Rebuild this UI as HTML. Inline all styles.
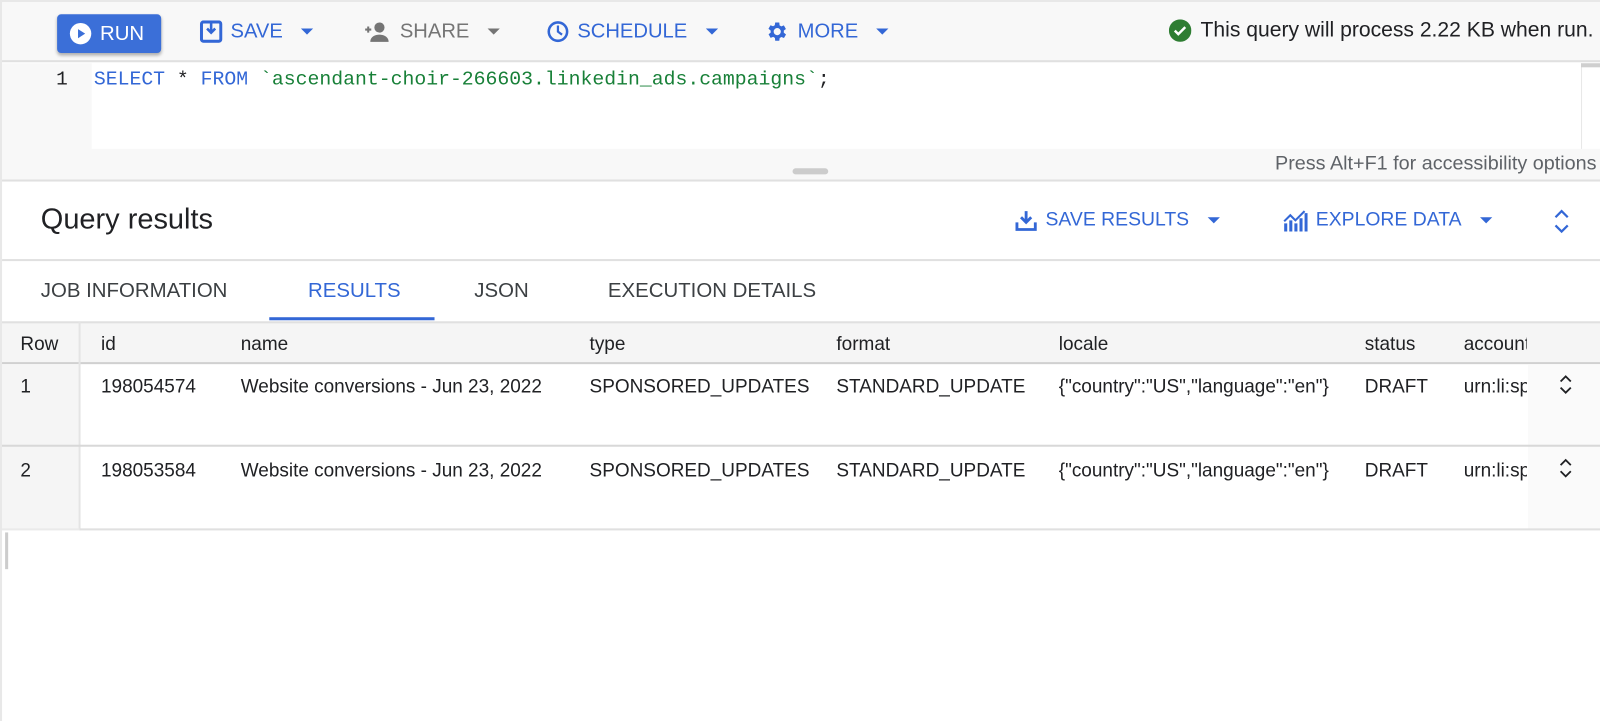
<!DOCTYPE html>
<html><head><style>
*{box-sizing:border-box;margin:0;padding:0}
body{width:1600px;height:707px;overflow:hidden;background:#fff;font-family:"Liberation Sans",Arial,sans-serif;position:relative;color:#202124}
#w{position:absolute;left:0;top:0;width:1600px;height:707px;transform:scale(1.02);transform-origin:0 0}
.a{position:absolute;white-space:nowrap}
.btn{position:absolute;top:17px;font-size:19.8px;color:#3367d6;display:flex;align-items:center;gap:8px;height:28px;white-space:nowrap}
.caret{width:0;height:0;border-left:6px solid transparent;border-right:6px solid transparent;border-top:6px solid currentColor;margin-left:10px}
.th{position:absolute;top:326px;font-size:18.6px;color:#202124;white-space:nowrap}
.td{position:absolute;font-size:18.6px;color:#202124;white-space:nowrap}
</style></head><body><div id="w">
<!-- toolbar -->
<div class="a" style="left:0;top:0;width:1600px;height:61px;background:#f8f8f8;border-top:2px solid #e8e8e8;border-bottom:2px solid #e0e0e0"></div>
<div class="a" style="left:0;top:0;width:2px;height:707px;background:#e8e8e8"></div>
<div class="a" style="left:56px;top:14px;width:102px;height:38px;background:#3b6fd8;border-radius:4px;box-shadow:0 2px 3px rgba(0,0,0,.3);color:#fff;font-size:20px;display:flex;align-items:center;padding-left:12px;gap:8px">
<svg width="22" height="22" viewBox="0 0 22 22"><circle cx="11" cy="11" r="10.5" fill="#fff"/><path d="M8.5 6.5v9l7-4.5z" fill="#3b6fd8"/></svg>RUN</div>
<div class="btn" style="left:196px"><svg width="22" height="22" viewBox="0 0 22 22"><rect x="1.5" y="1.5" width="19" height="19" rx="2" fill="none" stroke="#3367d6" stroke-width="3"/><path d="M11 3v9M7 8l4 4 4-4" stroke="#3367d6" stroke-width="2.5" fill="none"/></svg>SAVE<span class="caret"></span></div>
<div class="btn" style="left:356px;color:#757575"><svg width="28" height="22" viewBox="0 0 28 22"><path d="M2 9h6M5 6v6" stroke="#757575" stroke-width="2"/><circle cx="16" cy="7" r="5" fill="#757575"/><path d="M7 21c0-5 5-7 9-7s9 2 9 7z" fill="#757575"/></svg>SHARE<span class="caret"></span></div>
<div class="btn" style="left:536px"><svg width="22" height="22" viewBox="0 0 22 22"><circle cx="11" cy="11" r="9" fill="none" stroke="#3367d6" stroke-width="2.5"/><path d="M11 5v6l4 3" stroke="#3367d6" stroke-width="2.2" fill="none"/></svg>SCHEDULE<span class="caret"></span></div>
<div class="btn" style="left:750px"><svg width="24" height="24" viewBox="0 0 24 24"><path fill="#3367d6" d="M19.4 13a7.5 7.5 0 000-2l2.1-1.6-2-3.5-2.5 1a7.6 7.6 0 00-1.7-1L15 3h-4l-.4 2.7a7.6 7.6 0 00-1.7 1l-2.5-1-2 3.5L6.6 11a7.5 7.5 0 000 2l-2.1 1.6 2 3.5 2.5-1c.5.4 1.1.7 1.7 1L11 21h4l.4-2.7c.6-.3 1.2-.6 1.7-1l2.5 1 2-3.5zM13 15.5a3.5 3.5 0 110-7 3.5 3.5 0 010 7z" transform="translate(-1 0)"/></svg>MORE<span class="caret"></span></div>
<div class="a" style="left:1146px;top:18px;display:flex;align-items:center;gap:9px;font-size:20.7px;color:#202124"><svg width="22" height="22" viewBox="0 0 21 21"><circle cx="10.5" cy="10.5" r="10.5" fill="#2e7d32"/><path d="M5.5 10.5l3.3 3.3 6.5-6.5" stroke="#fff" stroke-width="2.3" fill="none"/></svg>This query will process 2.22 KB when run.</div>
<!-- editor -->
<div class="a" style="left:2px;top:62px;width:88px;height:84px;background:#f8f8f8"></div>
<div class="a" style="left:55px;top:67px;font-family:'Liberation Mono',monospace;font-size:19px;color:#202124">1</div>
<div class="a" style="left:92px;top:67px;font-family:'Liberation Mono',monospace;font-size:19.4px;color:#202124;white-space:pre"><span style="color:#3367d6">SELECT</span> * <span style="color:#3367d6">FROM</span> <span style="color:#188038">`ascendant-choir-266603.linkedin_ads.campaigns`</span>;</div>
<div class="a" style="left:1550px;top:62px;width:1px;height:84px;background:#e8e8e8"></div>
<div class="a" style="left:1550px;top:62px;width:50px;height:4px;background:#cfcfcf"></div>
<div class="a" style="left:2px;top:146px;width:1598px;height:32px;background:#f8f8f8;border-bottom:2px solid #e0e0e0"></div>
<div class="a" style="left:777px;top:165px;width:35px;height:6px;border-radius:3px;background:#ccc"></div>
<div class="a" style="left:1250px;top:149px;font-size:19.4px;color:#5f6368">Press Alt+F1 for accessibility options</div>
<!-- results header -->
<div class="a" style="left:40px;top:199px;font-size:28.4px;color:#202124">Query results</div>
<div class="btn" style="left:995px;top:202px;font-size:19px"><svg width="22" height="22" viewBox="0 0 22 22"><path d="M11 2v11M6 8l5 5 5-5" stroke="#3367d6" stroke-width="2.8" fill="none"/><path d="M2 13v7h18v-7" stroke="#3367d6" stroke-width="2.8" fill="none"/></svg>SAVE RESULTS<span class="caret"></span></div>
<div class="btn" style="left:1258px;top:202px;font-size:19px"><svg width="24" height="22" viewBox="0 0 24 22"><path fill="#3367d6" d="M1 14h3v8H1zM6 11h3v11H6zM11 14h3v8h-3zM16 9h3v13h-3zM21 4h3v18h-3z"/><path d="M1 12l6-6 5 5 9-9" stroke="#3367d6" stroke-width="2" fill="none"/></svg>EXPLORE DATA<span class="caret"></span></div>
<svg class="a" style="left:1522px;top:204px" width="18" height="26" viewBox="0 0 18 26"><path d="M3 9l6-6 6 6M3 17l6 6 6-6" stroke="#3367d6" stroke-width="2.2" fill="none"/></svg>
<div class="a" style="left:2px;top:254px;width:1598px;height:2px;background:#e0e0e0"></div>
<!-- tabs -->
<div class="a" style="left:40px;top:274px;font-size:20px;color:#3c4043">JOB INFORMATION</div>
<div class="a" style="left:302px;top:274px;font-size:20px;color:#3367d6">RESULTS</div>
<div class="a" style="left:465px;top:274px;font-size:20px;color:#3c4043">JSON</div>
<div class="a" style="left:596px;top:274px;font-size:20px;color:#3c4043">EXECUTION DETAILS</div>
<div class="a" style="left:264px;top:311px;width:162px;height:3px;background:#3367d6"></div>
<!-- table -->
<div class="a" style="left:2px;top:315px;width:1598px;height:42px;background:#f5f5f5;border-top:2px solid #e0e0e0;border-bottom:2px solid #d0d0d0"></div>
<div class="a" style="left:2px;top:357px;width:76px;height:162px;background:#f5f5f5"></div>
<div class="a" style="left:77px;top:315px;width:2px;height:205px;background:#e4e4e4"></div>
<div class="a" style="left:1498px;top:357px;width:102px;height:162px;background:#fafafa"></div>
<div class="a" style="left:2px;top:436px;width:1598px;height:2px;background:#d8d8d8"></div>
<div class="a" style="left:78px;top:518px;width:1522px;height:2px;background:#e0e0e0"></div>
<div class="a" style="left:2px;top:518px;width:76px;height:2px;background:#eaeaea"></div>
<div class="a" style="left:5px;top:522px;width:3px;height:36px;background:#ccc"></div>
<div class="th" style="left:20px">Row</div>
<div class="th" style="left:99px">id</div>
<div class="th" style="left:236px">name</div>
<div class="th" style="left:578px">type</div>
<div class="th" style="left:820px">format</div>
<div class="th" style="left:1038px">locale</div>
<div class="th" style="left:1338px">status</div>
<div class="th" style="left:1435px;width:62px;overflow:hidden">account</div>

<div class="td" style="left:20px;top:368px">1</div>
<div class="td" style="left:99px;top:368px">198054574</div>
<div class="td" style="left:236px;top:368px">Website conversions - Jun 23, 2022</div>
<div class="td" style="left:578px;top:368px">SPONSORED_UPDATES</div>
<div class="td" style="left:820px;top:368px">STANDARD_UPDATE</div>
<div class="td" style="left:1038px;top:368px">{"country":"US","language":"en"}</div>
<div class="td" style="left:1338px;top:368px">DRAFT</div>
<div class="td" style="left:1435px;top:368px;width:62px;overflow:hidden">urn:li:sponsored</div>
<svg class="a" style="left:1528px;top:367px" width="14" height="20" viewBox="0 0 14 20"><path d="M2 7l5-5 5 5M2 13l5 5 5-5" stroke="#202124" stroke-width="1.8" fill="none"/></svg>

<div class="td" style="left:20px;top:450px">2</div>
<div class="td" style="left:99px;top:450px">198053584</div>
<div class="td" style="left:236px;top:450px">Website conversions - Jun 23, 2022</div>
<div class="td" style="left:578px;top:450px">SPONSORED_UPDATES</div>
<div class="td" style="left:820px;top:450px">STANDARD_UPDATE</div>
<div class="td" style="left:1038px;top:450px">{"country":"US","language":"en"}</div>
<div class="td" style="left:1338px;top:450px">DRAFT</div>
<div class="td" style="left:1435px;top:450px;width:62px;overflow:hidden">urn:li:sponsored</div>
<svg class="a" style="left:1528px;top:449px" width="14" height="20" viewBox="0 0 14 20"><path d="M2 7l5-5 5 5M2 13l5 5 5-5" stroke="#202124" stroke-width="1.8" fill="none"/></svg>
</div></body></html>
